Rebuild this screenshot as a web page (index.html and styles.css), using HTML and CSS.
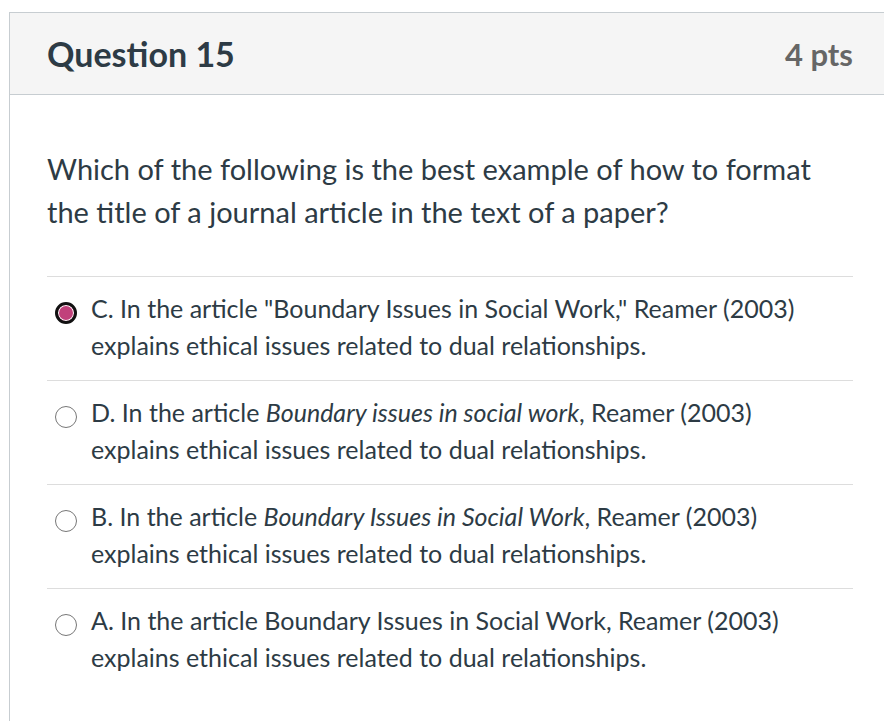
FILE: index.html
```html
<!DOCTYPE html>
<html lang="en">
<head>
    <meta charset="UTF-8">
    <title>Question 15</title>
    <link rel="stylesheet" href="styles.css">
</head>
<body>
    <div class="question">
        <div class="header">
            <h2>Question 15</h2>
            <span class="points">4 pts</span>
        </div>
        <div class="content">
            <p class="question-text">Which of the following is the best example of how to format the title of a journal article in the text of a paper?</p>
            <div class="answers">
                <label class="answer">
                    <span class="radio checked"></span>
                    <span class="answer-text">C. In the article "Boundary Issues in Social Work," Reamer (2003) explains ethical issues related to dual relationships.</span>
                </label>
                <label class="answer">
                    <span class="radio"></span>
                    <span class="answer-text">D. In the article <em>Boundary issues in social work</em>, Reamer (2003) explains ethical issues related to dual relationships.</span>
                </label>
                <label class="answer">
                    <span class="radio"></span>
                    <span class="answer-text">B. In the article <em>Boundary Issues in Social Work</em>, Reamer (2003) explains ethical issues related to dual relationships.</span>
                </label>
                <label class="answer">
                    <span class="radio"></span>
                    <span class="answer-text">A. In the article Boundary Issues in Social Work, Reamer (2003) explains ethical issues related to dual relationships.</span>
                </label>
            </div>
        </div>
    </div>
</body>
</html>
```

FILE: styles.css
```css
* {
    margin: 0;
    padding: 0;
    box-sizing: border-box;
    font-family: Lato, "Open Sans", sans-serif;
}
body {
    background: #fff;
    overflow: hidden;
    color: #2d3b45;
}
.question {
    margin: 12px 0 0 9px;
    border-top: 1px solid #c7cdd1;
    border-left: 1px solid #c7cdd1;
    height: 720px;
}
.header {
    display: flex;
    align-items: center;
    justify-content: space-between;
    height: 82px;
    padding: 0 31px 0 37px;
    background: #f5f5f5;
    border-bottom: 1px solid #c7cdd1;
}
.header h2 {
    font-size: 34px;
    font-weight: bold;
    color: #2d3b45;
}
.points {
    font-size: 31px;
    font-weight: bold;
    color: #666;
}
.content {
    padding: 52px 31px 0 37px;
}
.question-text {
    font-size: 29px;
    line-height: 43px;
    margin-bottom: 43px;
}
.answer {
    display: flex;
    align-items: flex-start;
    border-top: 1px solid #ddd;
    padding: 13px 40px 13px 0;
    min-height: 104px;
}
.radio {
    flex: none;
    width: 22px;
    height: 22px;
    border: 1.5px solid #777;
    border-radius: 50%;
    margin: 12px 14px 0 8px;
}
.radio.checked {
    border: 3.5px solid #111;
    background: #c1417b;
    box-shadow: inset 0 0 0 1px #fff;
}
.answer-text {
    font-size: 25px;
    line-height: 37px;
}
.answer-text em {
    font-style: italic;
}
```
